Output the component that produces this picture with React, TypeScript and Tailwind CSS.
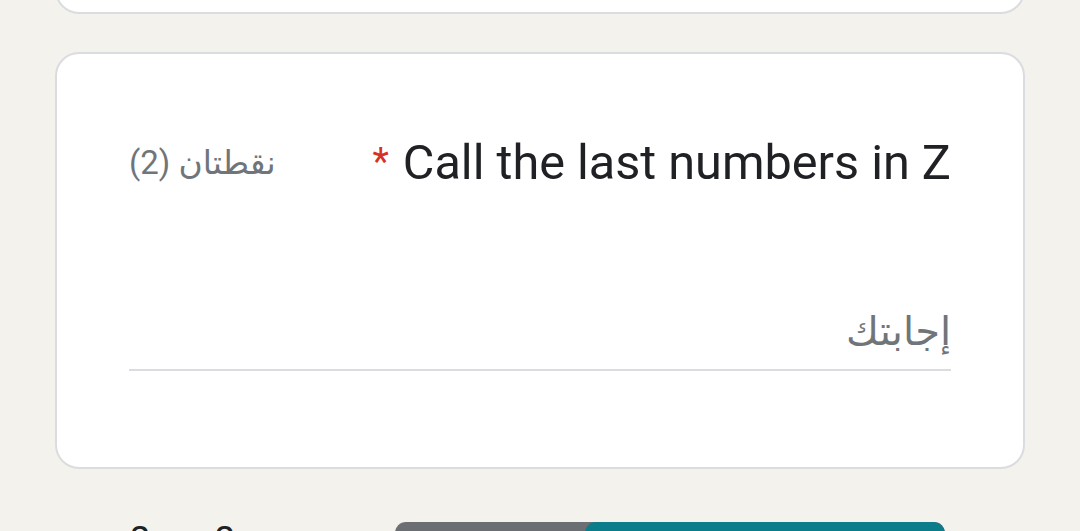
export default function App() {
  return (
    <div className="h-[531px] w-full overflow-hidden bg-[#f3f2ec] px-[55px] font-['Roboto','DejaVu_Sans',sans-serif]">
      {/* tail of the previous question card */}
      <div className="-mt-[46px] h-[60px] rounded-[24px] border-2 border-[#dadce0] bg-white" />

      {/* question card */}
      <div className="mt-[38px] rounded-[24px] border-2 border-[#dadce0] bg-white px-[72px] pt-[81px] pb-[96px]">
        <div className="flex h-[56px] items-center justify-between">
          <span className="text-[33px] text-[#70757a]" dir="rtl">
            نقطتان (2)
          </span>
          <div className="flex items-start gap-[14px]">
            <span className="mt-[8px] text-[38px] leading-none text-[#d93025]">*</span>
            <span className="text-[48.6px] leading-[56px] text-[#202124]">Call the last numbers in Z</span>
          </div>
        </div>

        <div className="mt-[117px] border-b-2 border-[#dadce0] pb-[13px] text-right" dir="rtl">
          <span className="text-[40px] leading-[48px] text-[#70757a]">إجابتك</span>
        </div>
      </div>

      {/* footer: page counter + progress */}
      <div className="mt-[49px] flex items-start px-[75px]">
        <span className="w-[265px] text-left text-[36px] leading-[44px] text-[#202124]" dir="rtl">
          صفحة 2 من 2
        </span>
        <div className="mt-[4px] flex h-[22px] w-[550px] overflow-hidden rounded-full bg-[#6b6e73]">
          <div className="w-[190px]" />
          <div className="flex-1 rounded-full bg-[#0b7d8a]" />
        </div>
      </div>
    </div>
  );
}
